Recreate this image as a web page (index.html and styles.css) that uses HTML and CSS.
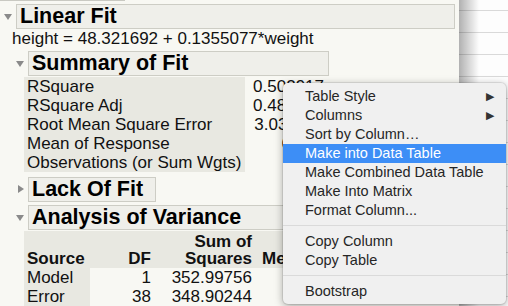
FILE: index.html
```html
<!DOCTYPE html>
<html lang="en">
<head>
  <meta charset="UTF-8" />
  <title>Linear Fit Report</title>
  <link rel="stylesheet" href="styles.css">
</head>
<body>

  <div class="desk">
    <!-- Report window -->
    <div class="report">
      <div class="topline"></div>

      <div class="outline">
        <span class="tri open"></span>
        <div class="head head-wide">Linear Fit</div>
      </div>
      <div class="equation">height = 48.321692 + 0.1355077*weight</div>

      <div class="outline sub">
        <span class="tri open"></span>
        <div class="head head-summary">Summary of Fit</div>
      </div>
      <table class="summary">
        <tr><td class="lbl">RSquare</td><td class="val">0.502917</td></tr>
        <tr><td class="lbl">RSquare Adj</td><td class="val">0.489836</td></tr>
        <tr><td class="lbl">Root Mean Square Error</td><td class="val">3.030117</td></tr>
        <tr><td class="lbl">Mean of Response</td><td class="val">62.55</td></tr>
        <tr><td class="lbl">Observations (or Sum Wgts)</td><td class="val">40</td></tr>
      </table>

      <div class="outline sub lack">
        <span class="tri closed"></span>
        <div class="head head-lack">Lack Of Fit</div>
      </div>

      <div class="outline sub anova-head">
        <span class="tri open"></span>
        <div class="head head-anova">Analysis of Variance</div>
      </div>
      <table class="anova">
        <tr class="hdr">
          <th class="src">Source</th>
          <th class="num df">DF</th>
          <th class="num ss">Sum of<br>Squares</th>
          <th class="ms">Mean Square</th>
        </tr>
        <tr><td class="src lbl">Model</td><td class="num">1</td><td class="num">352.99756</td><td></td></tr>
        <tr><td class="src lbl">Error</td><td class="num">38</td><td class="num">348.90244</td><td></td></tr>
      </table>
    </div>

    <!-- Window behind -->
    <div class="behind"></div>
  </div>

  <!-- Context menu -->
  <div class="menu">
    <div class="item">Table Style <span class="arrow">&#9654;</span></div>
    <div class="item">Columns <span class="arrow">&#9654;</span></div>
    <div class="item">Sort by Column…</div>
    <div class="item active">Make into Data Table</div>
    <div class="item">Make Combined Data Table</div>
    <div class="item">Make Into Matrix</div>
    <div class="item">Format Column...</div>
    <div class="sep"></div>
    <div class="item">Copy Column</div>
    <div class="item">Copy Table</div>
    <div class="sep"></div>
    <div class="item">Bootstrap</div>
  </div>

</body>
</html>
```

FILE: styles.css
```css
html, body {
  margin: 0;
  padding: 0;
  width: 508px;
  height: 306px;
  overflow: hidden;
  font-family: "Liberation Sans", Arial, sans-serif;
  color: #111;
}

.desk {
  display: flex;
  height: 306px;
}

/* Report window */
.report {
  width: 459px;
  flex-shrink: 0;
  background-color: #f8f8f3;
  padding-top: 4px;
  box-sizing: border-box;
  position: relative;
}
.topline {
  position: absolute;
  top: 0;
  left: 0;
  width: 125px;
  height: 1px;
  background: #c9c9c2;
}

.outline {
  display: flex;
  align-items: center;
}
.outline.sub {
  margin-top: 4px;
  padding-left: 12px;
}
.outline.lack {
  margin-top: 5px;
}
.outline.anova-head {
  margin-top: 3px;
}

.tri {
  width: 16px;
  height: 25px;
  position: relative;
  flex-shrink: 0;
}
.tri.open::before {
  content: "";
  position: absolute;
  left: 4px;
  top: 10px;
  border-left: 4px solid transparent;
  border-right: 4px solid transparent;
  border-top: 6px solid #8a8a8a;
}
.tri.closed::before {
  content: "";
  position: absolute;
  left: 6px;
  top: 8px;
  border-top: 4px solid transparent;
  border-bottom: 4px solid transparent;
  border-left: 6px solid #8a8a8a;
}

.head {
  height: 25px;
  box-sizing: border-box;
  border: 1px solid #cdcdc5;
  background-color: #efefea;
  font-weight: bold;
  font-size: 21.5px;
  line-height: 23px;
  padding-left: 3px;
  color: #000;
}
.head-wide { width: 439px; }
.head-summary { width: 301px; }
.head-lack { width: 128px; }
.head-anova { width: 320px; }

.equation {
  font-size: 17px;
  line-height: 17px;
  padding: 1px 0 0 12px;
  height: 17px;
}

/* Tables */
table {
  border-collapse: collapse;
  margin-left: 24px;
  font-size: 17px;
}
td, th {
  padding: 0;
  height: 19px;
  line-height: 19px;
  white-space: nowrap;
}

.summary {
  margin-top: 1px;
}
.summary .lbl {
  width: 218px;
  padding-left: 3px;
  background-color: #e8e8e1;
}
.summary .val {
  width: 79px;
  text-align: right;
}

.anova {
  margin-top: 1px;
}
.anova .hdr th {
  background-color: #e8e8e1;
  height: 36px;
  line-height: 17px;
  vertical-align: bottom;
  padding-bottom: 1px;
  font-weight: bold;
}
.anova .src {
  width: 63px;
  padding-left: 3px;
  text-align: left;
}
.anova td.lbl {
  background-color: #e8e8e1;
}
.anova td {
  height: 19px;
  line-height: 19px;
}
.anova .num {
  text-align: right;
}
.anova .df {
  width: 61px;
}
.anova .ss {
  width: 101px;
}
.anova .ms {
  text-align: left;
  padding-left: 10px;
  width: 120px;
}

/* Window behind */
.behind {
  flex: 1;
  background-color: #fdfdfd;
  background-image:
    linear-gradient(to right, rgba(0, 0, 0, 0.3), rgba(0, 0, 0, 0) 20px),
    repeating-linear-gradient(to bottom, transparent 0, transparent 10px, #d9d9d9 10px, #d9d9d9 11px, transparent 11px, transparent 22px);
}

/* Context menu */
.menu {
  position: absolute;
  left: 283px;
  top: 83px;
  width: 223px;
  height: 221px;
  box-sizing: border-box;
  padding-top: 4px;
  background-color: #f0f0f0;
  border-radius: 5px;
  box-shadow: 0 2px 8px rgba(0, 0, 0, 0.35), 0 0 0 1px rgba(0, 0, 0, 0.08);
  font-size: 14.5px;
  color: #262626;
}
.item {
  height: 19px;
  line-height: 19px;
  padding-left: 22px;
  position: relative;
}
.item.active {
  background-color: #3d8ef6;
  color: #fff;
}
.arrow {
  position: absolute;
  right: 12px;
  top: 0;
  font-size: 11px;
  color: #333;
}
.sep {
  height: 1px;
  background-color: #dadada;
  margin: 5px 0 6px;
}
```
